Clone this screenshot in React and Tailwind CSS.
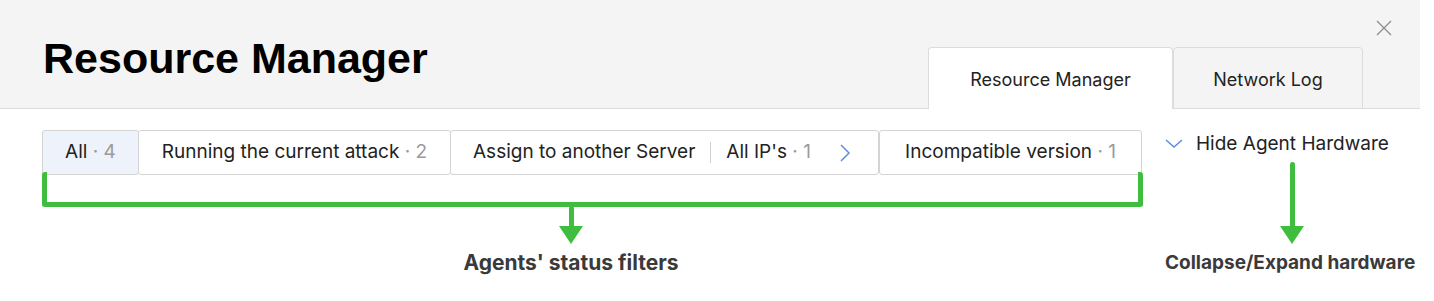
import { useState } from "react";

const filters = [
  { label: "All", count: 4 },
  { label: "Running the current attack", count: 2 },
];

const Count = ({ n }) => <span className="text-[#9a9a9a]">&nbsp;· {n}</span>;

const ChevronRight = () => (
  <svg width="12" height="20" viewBox="0 0 12 20" fill="none">
    <path d="M2 2l8 8-8 8" stroke="#5b8ee0" strokeWidth="1.5" />
  </svg>
);

const ChevronDown = () => (
  <svg width="18" height="10" viewBox="0 0 18 10" fill="none">
    <path d="M1 1l8 7 8-7" stroke="#5b8ee0" strokeWidth="1.5" />
  </svg>
);

const DownArrow = ({ length }) => (
  <div className="flex flex-col items-center">
    <div className="w-[5px] bg-[#3fbd3f] rounded-t-sm" style={{ height: length }} />
    <div className="w-0 h-0 border-x-[12px] border-x-transparent border-t-[18px] border-t-[#3fbd3f]" />
  </div>
);

const App = () => {
  const [active, setActive] = useState(0);

  return (
    <div className="w-[1434px] h-[301px] bg-white font-['Inter','Noto_Sans',sans-serif] text-[#222]">
      <div className="w-[1420px] h-[109px] bg-[#f4f4f4] border-b border-[#dcdcdc] flex justify-between">
        <h1 className="pl-[43px] pt-[33px] text-[43px] leading-[50px] font-bold text-black font-['Liberation_Sans',Arial,sans-serif]">
          Resource Manager
        </h1>
        <div className="flex flex-col items-end pr-[27px]">
          <button className="mt-[19px] w-[18px] h-[18px] flex items-center justify-center">
            <svg width="16" height="16" viewBox="0 0 16 16" fill="none">
              <path d="M1 1l14 14M15 1L1 15" stroke="#8a8a8a" strokeWidth="1.2" />
            </svg>
          </button>
          <div className="mt-[11px] mr-[30px] flex -mb-px">
            <div className="w-[245px] h-[62px] pt-[2px] bg-white border border-b-0 border-[#dcdcdc] rounded-t-[4px] flex items-center justify-center text-[18px]">
              Resource Manager
            </div>
            <div className="w-[190px] h-[62px] pt-[2px] bg-[#f4f4f4] border border-[#dcdcdc] rounded-t-[4px] flex items-center justify-center text-[18px]">
              Network Log
            </div>
          </div>
        </div>
      </div>

      <div className="flex pl-[42px] pt-[21px]">
        <div className="w-[1101px] flex flex-col">
          <div className="flex h-[45px] text-[19px]">
            {filters.map((f, i) => (
              <button
                key={f.label}
                onClick={() => setActive(i)}
                className={`h-full border border-[#d4d4d4] rounded-[3px] flex items-center justify-center ${
                  i === 0 ? "w-[97px] bg-[#edf2fb]" : "w-[313px] bg-white -ml-px"
                }`}
              >
                <span>
                  {f.label}
                  <Count n={f.count} />
                </span>
              </button>
            ))}
            <div className="w-[429px] h-full border border-[#d4d4d4] rounded-[3px] bg-white flex items-center pl-[22px] -ml-px">
              <span>Assign to another Server</span>
              <span className="mx-[15px] w-px h-[21px] bg-[#cfcfcf]" />
              <span>
                All IP's
                <Count n={1} />
              </span>
              <span className="ml-[28px] flex items-center">
                <ChevronRight />
              </span>
            </div>
            <div className="w-[263px] h-full border border-[#d4d4d4] rounded-[3px] bg-white flex items-center justify-center">
              <span>
                Incompatible version
                <Count n={1} />
              </span>
            </div>
          </div>
          <div className="-mt-[3px] h-[35px] border-x-[5px] border-b-[5px] border-[#3fbd3f] rounded-[3px]" />
          <div className="ml-[419px] w-[220px] flex flex-col items-center">
            <div className="-mt-px">
              <DownArrow length={20} />
            </div>
            <div className="mt-[3px] text-[21px] font-bold text-[#3a3a3a] whitespace-nowrap">
              Agents' status filters
            </div>
          </div>
        </div>

        <div className="ml-[22px] flex flex-col">
          <div className="mt-[2px] flex items-center h-[24px] text-[19px]">
            <ChevronDown />
            <span className="ml-[13px]">Hide Agent Hardware</span>
          </div>
          <div className="mt-[6px] ml-[115px] w-[24px]">
            <DownArrow length={64} />
          </div>
          <div className="mt-[5px] text-[19px] font-bold text-[#3a3a3a] whitespace-nowrap">
            Collapse/Expand hardware
          </div>
        </div>
      </div>
    </div>
  );
};

export default App;
